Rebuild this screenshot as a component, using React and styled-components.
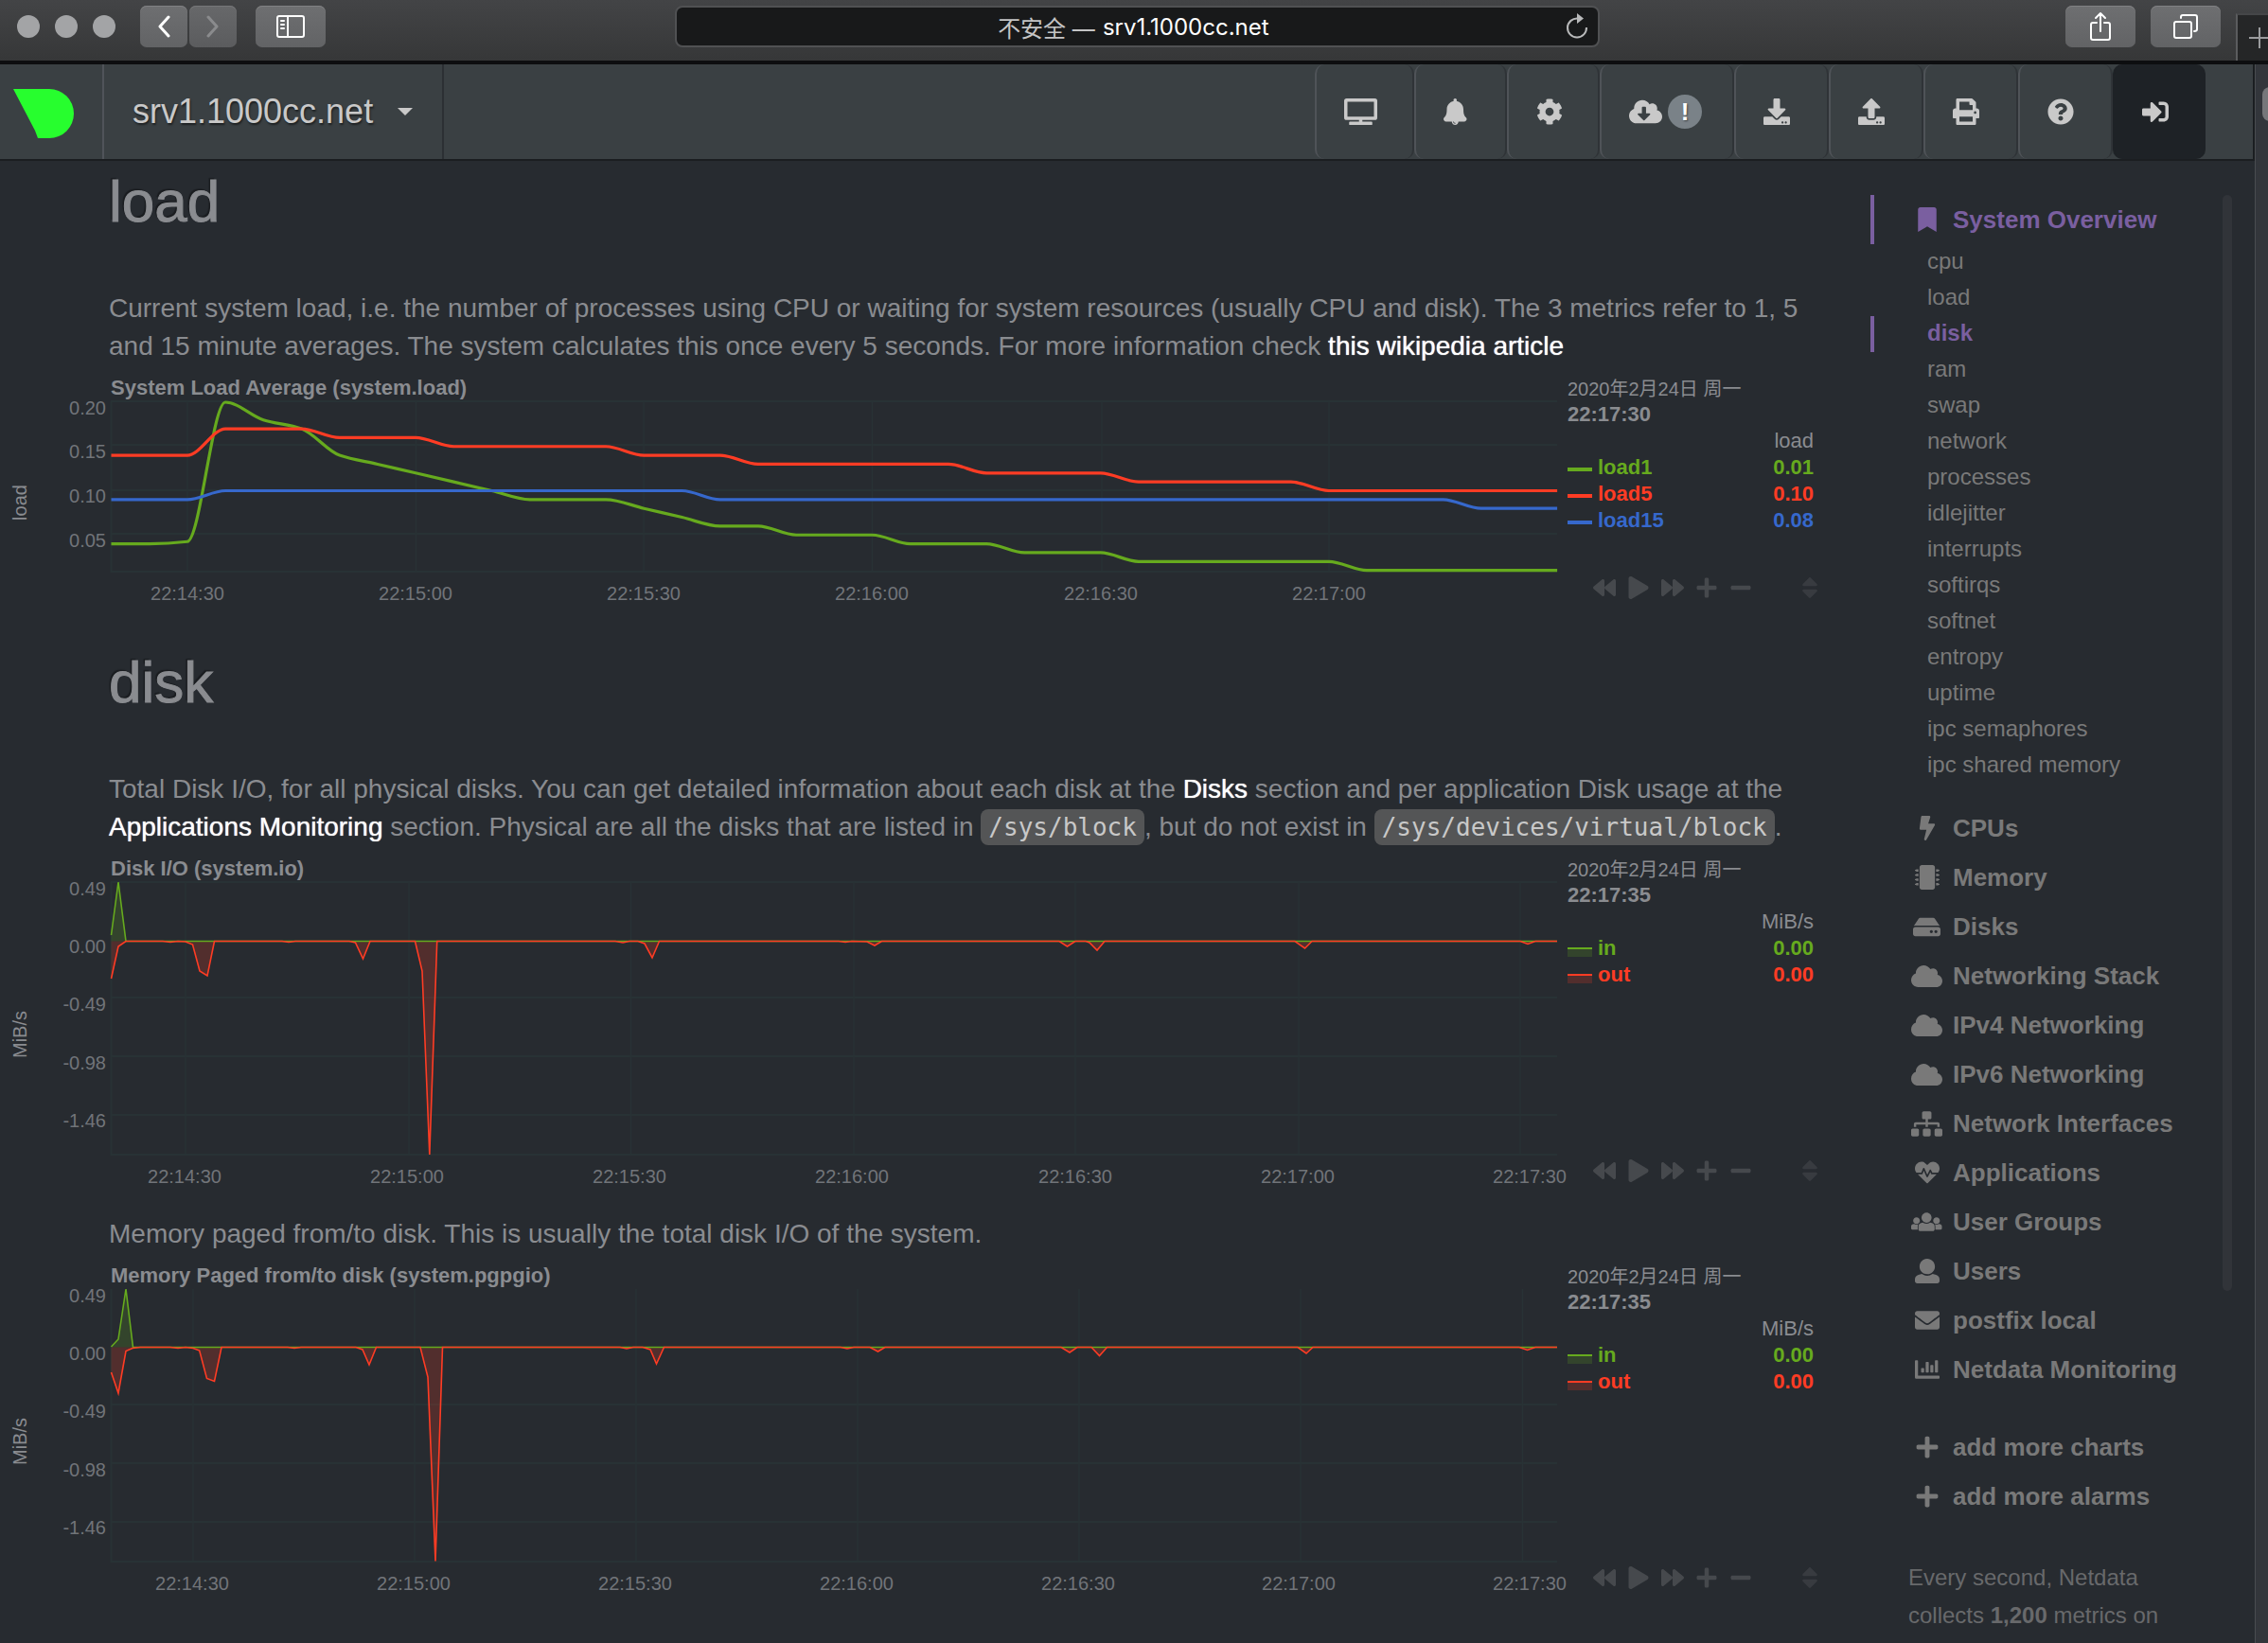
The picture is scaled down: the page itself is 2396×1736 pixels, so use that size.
import React from 'react';
import styled, { createGlobalStyle } from 'styled-components';
import {
  FaTv, FaCog, FaCloudDownloadAlt, FaDownload, FaUpload, FaQuestionCircle, FaSignInAlt,
  FaBookmark, FaBolt, FaMicrochip, FaHdd, FaCloud, FaSitemap, FaHeartbeat, FaEnvelope,
  FaChartBar, FaPlus, FaMinus, FaBackward, FaPlay, FaForward, FaSort,
} from 'react-icons/fa';

const GREEN = '#66aa1e';
const RED = '#ff3c24';
const BLUE = '#3668cc';

const Global = createGlobalStyle`
  * { box-sizing: border-box; }
  html, body { margin: 0; height: 100%; background: #272b30; overflow: hidden; }
  body { font-family: "Liberation Sans", "Noto Sans CJK SC", sans-serif; color: #8a8c90; }
  button { font: inherit; color: inherit; background: none; border: 0; padding: 0; cursor: pointer; }
  a { text-decoration: none; color: inherit; }
  svg { display: block; flex: none; }
`;

/* ---------- browser window ---------- */

const Window = styled.div`
  display: flex;
  flex-direction: column;
  height: 100vh;
  overflow: hidden;
`;

const BrowserBar = styled.div`
  flex: none;
  display: grid;
  grid-template-columns: 713fr 977fr 706fr;
  height: 68px;
  background: linear-gradient(#434446, #363738);
  border-bottom: 4px solid #0d0e10;
`;

const BarSide = styled.div`
  display: flex;
  align-items: flex-start;
  padding-top: 6px;
  padding-left: ${(p) => (p.$end ? 0 : 18)}px;
  justify-content: ${(p) => (p.$end ? 'flex-end' : 'flex-start')};
`;

const Lights = styled.div`
  display: flex;
  gap: 16px;
  height: 44px;
  align-items: center;
  margin-right: 26px;
`;

const Light = styled.span`
  width: 24px;
  height: 24px;
  border-radius: 50%;
  background: #a3a4a6;
`;

const BarButton = styled.button`
  display: flex;
  align-items: center;
  justify-content: center;
  width: ${(p) => p.$w}px;
  height: 44px;
  margin-right: ${(p) => p.$gap}px;
  border-radius: 7px;
  background: linear-gradient(#6e6f71, #626365);
  box-shadow: inset 0 1px #808183;
  color: ${(p) => (p.$dim ? '#98999b' : '#fff')};
  opacity: ${(p) => (p.$dim ? 0.85 : 1)};
`;

const NewTab = styled.button`
  display: flex;
  align-items: center;
  padding-left: 12px;
  width: 34px;
  height: 50px;
  margin-top: 8px;
  border-left: 2px solid #5b5c5e;
  border-top: 2px solid #454648;
  background: #252627;
  color: #9b9c9e;
  overflow: hidden;
`;

const Address = styled.div`
  display: flex;
  align-items: center;
  height: 44px;
  margin-top: 6px;
  padding: 0 10px 0 34px;
  border: 2px solid #505153;
  border-radius: 8px;
  background: #18191a;
  font-family: Inter, "Noto Sans CJK SC", sans-serif;
  font-size: 24px;
  color: #c4c4c5;
`;

const AddressText = styled.label`
  flex: 1;
  display: flex;
  justify-content: center;
  align-items: center;
  gap: 8px;
`;

const AddressInput = styled.input`
  width: 184px;
  padding: 0;
  border: 0;
  background: none;
  color: #fff;
  font: inherit;
`;

/* ---------- page frame ---------- */

const Viewport = styled.div`
  flex: 1;
  min-height: 0;
  display: flex;
`;

const Page = styled.div`
  flex: 1;
  min-width: 0;
  display: flex;
  flex-direction: column;
`;

const Gutter = styled.div`
  flex: none;
  width: 14px;
  padding: 24px 0 0 7px;
  background: #33363b;
  border-left: 1px solid #494c50;
  overflow: hidden;
`;

const Thumb = styled.div`
  width: 16px;
  height: 36px;
  border-radius: 8px;
  background: #76777a;
`;

const Header = styled.header`
  flex: none;
  display: flex;
  height: 102px;
  background: #3a4043;
  border-bottom: 2px solid #1b1e21;
  border-right: 2px solid #1b1e21;
  color: #c9c9c9;
`;

const Brand = styled.a`
  display: flex;
  align-items: center;
  width: 110px;
  padding-left: 14px;
  padding-top: 3px;
  border-right: 2px solid #50545a;
`;

const HostButton = styled.button`
  display: flex;
  align-items: center;
  gap: 26px;
  padding: 0 31px 0 30px;
  border-right: 2px solid #2b2f33;
  font-size: 36px;
  text-shadow: 1px 2px 2px rgba(0, 0, 0, 0.5);
`;

const Tools = styled.nav`
  display: flex;
  margin-left: auto;
  margin-right: 50px;
`;

const Tool = styled.button`
  flex: none;
  display: flex;
  align-items: center;
  gap: 6px;
  width: ${(p) => p.$w}px;
  padding-left: 29px;
  border-left: 2px solid ${(p) => (p.$active ? '#1e2226' : '#4f5358')};
  border-right: 2px solid ${(p) => (p.$active ? '#1e2226' : '#2f3337')};
  border-radius: 10px;
  background: ${(p) => (p.$active ? '#1e2226' : 'transparent')};
`;

const Badge = styled.span`
  width: 36px;
  height: 36px;
  border-radius: 50%;
  background: #7a8288;
  color: #fff;
  font-size: 26px;
  font-weight: bold;
  line-height: 36px;
  text-align: center;
  text-shadow: 1px 1px 2px rgba(0, 0, 0, 0.5);
`;

const Columns = styled.div`
  flex: 1;
  min-height: 0;
  display: flex;
  background: #272b30;
`;

/* ---------- main column ---------- */

const Main = styled.main`
  flex: 1;
  min-width: 0;
  padding-top: 10px;
`;

const Heading = styled.h1`
  margin: 0 0 60px;
  padding-left: 115px;
  font-size: 62px;
  line-height: 66px;
  font-weight: normal;
  -webkit-text-stroke: 1px currentColor;
  text-shadow: -2px -2px 1px rgba(0, 0, 0, 0.35);
`;

const Text = styled.p`
  margin: 0 0 12px;
  padding: 0 44px 0 115px;
  font-size: 28px;
  line-height: 40px;
`;

const TextLink = styled.a`
  color: #fff;
  text-shadow: 0 0 1px #fff;
`;

const Code = styled.code`
  padding: 4px 8px;
  border-radius: 8px;
  background: #545556;
  color: #c8c8c8;
  font-family: "DejaVu Sans Mono", monospace;
  font-size: 26px;
`;

const Figure = styled.section`
  display: flex;
  margin-bottom: ${(p) => p.$after}px;
`;

const Plot = styled.div`
  flex: 1;
  min-width: 0;
  svg { width: 100%; height: auto; overflow: visible; }
  text { font-size: 20px; fill: #717479; }
`;

const PlotTitle = styled.h2`
  margin: 0;
  padding-left: 117px;
  font-size: 22px;
  line-height: 24px;
  font-weight: bold;
`;

const Legend = styled.aside`
  flex: none;
  display: flex;
  flex-direction: column;
  width: 320px;
  font-size: 22px;
  line-height: 28px;
`;

const LegendDate = styled.div`
  font-size: 20px;
  line-height: 26px;
`;

const LegendTime = styled.div`
  font-weight: bold;
`;

const LegendTable = styled.table`
  width: 260px;
  border-collapse: collapse;
  th, td { padding: 0; height: 28px; }
`;

const Unit = styled.th`
  text-align: right;
  font-weight: normal;
`;

const Series = styled.th`
  text-align: left;
  color: ${(p) => p.$color};
`;

const Value = styled.td`
  text-align: right;
  font-weight: bold;
  color: ${(p) => p.$color};
`;

const SeriesName = styled.span`
  display: flex;
  align-items: center;
  gap: 6px;
`;

const Swatch = styled.i`
  width: 26px;
  height: ${(p) => (p.$area ? 10 : 4)}px;
  margin-top: ${(p) => (p.$area ? 8 : 4)}px;
  border-top: ${(p) => (p.$area ? 2 : 4)}px solid ${(p) => p.$color};
  background: ${(p) => p.$color}33;
`;

const Controls = styled.div`
  display: flex;
  align-items: center;
  height: 26px;
  margin: auto 50px 30px 27px;
  color: #46494d;
`;

const Control = styled.button`
  display: flex;
  width: 36px;
`;

const Resize = styled.button`
  display: flex;
  justify-content: flex-end;
  flex: 1;
  color: #383b40;
`;

/* ---------- side menu ---------- */

const Side = styled.aside`
  flex: none;
  display: flex;
  justify-content: space-between;
  width: 406px;
  padding: 36px 24px 0 0;
`;

const Menu = styled.nav`
  width: 340px;
  color: #797979;
`;

const MenuItem = styled.a`
  display: flex;
  align-items: center;
  height: 52px;
  padding-left: 39px;
  border-left: 4px solid ${(p) => (p.$active ? '#7a5fa0' : 'transparent')};
  color: ${(p) => (p.$active ? '#7a5fa0' : 'inherit')};
  font-size: 26px;
  font-weight: bold;
  white-space: nowrap;
`;

const MenuIcon = styled.span`
  display: flex;
  justify-content: center;
  width: 33px;
  margin-right: 11px;
`;

const SubItem = styled.a`
  display: block;
  height: 38px;
  padding-left: 56px;
  border-left: 4px solid ${(p) => (p.$active ? '#7a5fa0' : 'transparent')};
  color: ${(p) => (p.$active ? '#7a5fa0' : 'inherit')};
  font-size: 24px;
  font-weight: ${(p) => (p.$active ? 'bold' : 'normal')};
  line-height: 36px;
`;

const MenuGroup = styled.div`
  margin-bottom: ${(p) => p.$after}px;
`;

const MenuNote = styled.p`
  margin: 0;
  padding-left: 40px;
  font-size: 24px;
  line-height: 40px;
  color: #68696b;
`;

const MenuScroll = styled.div`
  width: 10px;
  height: 1158px;
  border-radius: 5px;
  background: #313439;
`;

/* ---------- drawings ---------- */

const glyph = (w, top, h, d) => ({ size }) => (
  <svg width={(size * w) / 512} height={(size * h) / 512} viewBox={`0 ${top} ${w} ${h}`} fill="currentColor">
    <path d={d} />
  </svg>
);

const BellIcon = glyph(448, 0, 512, 'M433.884 366.059C411.634 343.809 384 316.118 384 208c0-79.394-57.831-145.269-133.663-157.83A31.845 31.845 0 0 0 256 32c0-17.673-14.327-32-32-32s-32 14.327-32 32c0 6.75 2.095 13.008 5.663 18.17C121.831 62.731 64 128.606 64 208c0 108.118-27.643 135.809-49.893 158.059C-16.042 396.208 5.325 448 48.048 448H160c0 35.346 28.654 64 64 64s64-28.654 64-64h111.943c42.638 0 64.151-51.731 33.941-81.941zM224 472a8 8 0 0 1 0 16c-22.056 0-40-17.944-40-40h16c0 13.234 10.766 24 24 24z');
const PrintIcon = glyph(512, 0, 512, 'M464 192h-16V81.941a24 24 0 0 0-7.029-16.97L383.029 7.029A24 24 0 0 0 366.059 0H88C74.745 0 64 10.745 64 24v168H48c-26.51 0-48 21.49-48 48v132c0 6.627 5.373 12 12 12h52v104c0 13.255 10.745 24 24 24h336c13.255 0 24-10.745 24-24V384h52c6.627 0 12-5.373 12-12V240c0-26.51-21.49-48-48-48zm-80 256H128v-96h256v96zM384 224H128V64h192v48c0 8.837 7.163 16 16 16h48v96zm48 72c-13.255 0-24-10.745-24-24s10.745-24 24-24 24 10.745 24 24-10.745 24-24 24z');
const UserIcon = glyph(512, 0, 512, 'M256 0c88.366 0 160 71.634 160 160s-71.634 160-160 160S96 248.366 96 160 167.634 0 256 0zm183.283 333.821l-71.313-17.828c-74.923 53.89-165.738 41.864-223.94 0l-71.313 17.828C29.981 344.505 0 382.903 0 426.955V464c0 26.51 21.49 48 48 48h416c26.51 0 48-21.49 48-48v-37.045c0-44.052-29.981-82.45-72.717-93.134z');
const UsersIcon = glyph(640, 0, 512, 'M320 64c57.99 0 105 47.01 105 105s-47.01 105-105 105-105-47.01-105-105S262.01 64 320 64zm113.463 217.366l-39.982-9.996c-49.168 35.365-108.766 27.473-146.961 0l-39.982 9.996C174.485 289.379 152 318.177 152 351.216V412c0 19.882 16.118 36 36 36h264c19.882 0 36-16.118 36-36v-60.784c0-33.039-22.485-61.837-54.537-69.85zM528 300c38.66 0 70-31.34 70-70s-31.34-70-70-70-70 31.34-70 70 31.34 70 70 70zm-416 0c38.66 0 70-31.34 70-70s-31.34-70-70-70-70 31.34-70 70 31.34 70 70 70zm24 112v-60.784c0-16.551 4.593-32.204 12.703-45.599-29.988 14.72-63.336 8.708-85.69-7.37l-26.655 6.664C14.99 310.252 0 329.452 0 351.477V392c0 13.255 10.745 24 24 24h112.169a52.417 52.417 0 0 1-.169-4zm467.642-107.09l-26.655-6.664c-27.925 20.086-60.89 19.233-85.786 7.218C499.369 318.893 504 334.601 504 351.216V412c0 1.347-.068 2.678-.169 4H616c13.255 0 24-10.745 24-24v-40.523c0-22.025-14.99-41.225-36.358-46.567z');

const Stroke = ({ w, h, d, sw = 2 }) => (
  <svg width={w} height={h} viewBox={`0 0 ${w} ${h}`} fill="none" stroke="currentColor" strokeWidth={sw} strokeLinecap="round" strokeLinejoin="round">
    <path d={d} />
  </svg>
);

/* Cubic segments with flattened tangents at every local extreme. */
function smoothPath(points) {
  const slope = points.slice(1).map((p, i) => (p[1] - points[i][1]) / (p[0] - points[i][0]));
  const tangent = points.map((_, i) => {
    if (i === 0 || i === points.length - 1) return 0;
    const a = slope[i - 1];
    const b = slope[i];
    return a * b <= 0 ? 0 : (2 * a * b) / (a + b);
  });
  return points.slice(1).reduce((path, p, i) => {
    const q = points[i];
    const d = (p[0] - q[0]) / 3;
    return `${path} C${q[0] + d} ${q[1] + tangent[i] * d} ${p[0] - d} ${p[1] - tangent[i + 1] * d} ${p[0]} ${p[1]}`;
  }, `M${points[0][0]} ${points[0][1]}`);
}

const run = (...pairs) => pairs.flatMap(([value, count]) => Array(count).fill(value));
const loadLine = (values) => smoothPath(values.map((v, i) => [117.5 + i * 40.2, 96.5 - (v - 0.1) * 935]));

const load1 = loadLine([
  0.04, 0.04, 0.0425, 0.2, 0.18, 0.17, 0.14, 0.13, 0.12, 0.11, 0.1,
  ...run([0.09, 3], [0.08, 1], [0.07, 1], [0.06, 2], [0.05, 3], [0.04, 3], [0.03, 3], [0.02, 6], [0.01, 6]),
]);
const load5 = loadLine(run([0.14, 3], [0.17, 3], [0.16, 3], [0.15, 5], [0.14, 3], [0.13, 6], [0.12, 4], [0.11, 5], [0.1, 7]));
const load15 = loadLine(run([0.09, 3], [0.1, 13], [0.09, 20], [0.08, 3]));

const Grid = ({ rows, cols, bottom }) => (
  <g stroke="#283235" strokeWidth="2">
    {rows.map((y) => <path key={y} d={`M117 ${y}H1645`} />)}
    {cols.map((x) => <path key={x} d={`M${x} 2V${bottom}`} strokeWidth="1.5" />)}
    <path d={`M117.5 2V${bottom}H1645`} fill="none" />
  </g>
);

const Axes = ({ ys, xs, xY, name, nameY }) => (
  <g>
    {ys.map(([y, t]) => <text key={t} x="112" y={y + 7} textAnchor="end">{t}</text>)}
    {xs.map(([x, t]) => <text key={t} x={x} y={xY + 7} textAnchor="middle">{t}</text>)}
    <text transform={`translate(28 ${nameY}) rotate(-90)`} textAnchor="middle" style={{ fill: '#8a8c90' }}>{name}</text>
  </g>
);

const times = ['22:14:30', '22:15:00', '22:15:30', '22:16:00', '22:16:30', '22:17:00', '22:17:30'];
const label = (xs) => xs.map((x, i) => [x, times[i]]);

const LoadPlot = () => (
  <svg viewBox="0 0 1656 242" role="img" aria-label="System load">
    <Grid rows={[2, 48, 96, 142]} cols={[198, 439.5, 680, 921.5, 1164, 1404]} bottom={182} />
    <g fill="none" strokeWidth="3.2">
      <path d={load1} stroke={GREEN} />
      <path d={load5} stroke={RED} />
      <path d={load15} stroke={BLUE} />
    </g>
    <Axes
      ys={[[9, '0.20'], [55, '0.15'], [102, '0.10'], [149, '0.05']]}
      xs={label([198, 439, 680, 921, 1163, 1404])}
      xY={205}
      name="load"
      nameY={109}
    />
  </svg>
);

const points = (list) => list.map((p) => p.join(' ')).join('L');
const AreaPlot = ({ zero, rows, cols, labelX, ins, outs, name }) => (
  <svg viewBox="0 0 1656 350" role="img" aria-label={name}>
    <Grid rows={rows} cols={cols} bottom={290} />
    <path d={`M117.5 ${zero}L${points(ins)}H117.5`} fill={GREEN} fillOpacity="0.2" />
    <path d={`M117.5 ${zero}L${points(outs)}H117.5`} fill={RED} fillOpacity="0.2" />
    <path d={`M${points(ins)}H1645`} fill="none" stroke={GREEN} strokeWidth="1.6" />
    <path d={`M${points(outs)}H1645`} fill="none" stroke={RED} strokeWidth="1.6" />
    <Axes
      ys={[[9, '0.49'], [70, '0.00'], [131, '-0.49'], [193, '-0.98'], [254, '-1.46']]}
      xs={label(labelX)}
      xY={313}
      name="MiB/s"
      nameY={163}
    />
  </svg>
);

const ioIn = [[117.5, 58], [125, 2], [133, 64.5]];
const ioOut = [
  [117.5, 104], [125, 70], [133, 64.5], [172, 64.5], [180, 65.5], [188, 64.5], [196, 65], [203.5, 68], [211, 96], [219, 101], [226.5, 64.5],
  [298, 64.5], [305, 65.5], [312, 64.5], [369, 64.5], [375.5, 66], [383.5, 83], [391, 64.5], [438.5, 64.5], [446, 96], [453.8, 290], [461.7, 64.5],
  [650, 64.5], [658, 66], [665, 64.5], [674, 64.5], [681, 67], [689, 82], [696.5, 64.5], [886, 64.5], [893, 65.5], [900, 64.5],
  [916, 65], [924, 69], [931.5, 64.5], [1119, 64.5], [1127.5, 70], [1136, 64.5], [1147, 64.5], [1151, 66], [1159, 74], [1167, 64.5],
  [1368, 64.5], [1378.5, 72], [1386, 64.5], [1606, 64.5], [1614, 67.5], [1622, 64.5],
];
const pgIn = [[117.5, 63], [125, 55], [133, 2], [140.5, 63.5]];
const pgOut = [
  [117.5, 90], [125, 112], [133, 67.5], [140, 64.5], [148, 63.5], [180, 63.5], [188, 64.5], [196, 63.5], [204, 64.5], [210.7, 67], [218.5, 96.5], [226.5, 99.5],
  [234, 63.5], [304, 63.5], [311, 64.5], [318, 63.5], [376, 63.5], [383, 66], [390, 82], [397.5, 63.5], [444, 63.5], [452, 95], [460, 289.5], [467.5, 63.5],
  [655, 63.5], [662, 65], [669, 63.5], [679, 63.5], [687, 66], [693.5, 81], [701.5, 63.5], [888, 63.5], [895, 65], [902, 63.5],
  [919, 63.5], [927.5, 68], [935, 63.5], [1121, 63.5], [1130, 69], [1138, 63.5], [1153, 63.5], [1161.5, 72.5], [1169.5, 63.5],
  [1371, 63.5], [1380, 70], [1387, 63.5], [1605, 63.5], [1613.6, 66.5], [1622, 63.5],
];

/* ---------- composed parts ---------- */

function Chart({ title, time, unit, series, area, after = 0, children }) {
  return (
    <Figure $after={after}>
      <Plot>
        <PlotTitle>{title}</PlotTitle>
        {children}
      </Plot>
      <Legend>
        <LegendDate>2020年2月24日 周一</LegendDate>
        <LegendTime>{time}</LegendTime>
        <LegendTable>
          <thead><tr><td /><Unit scope="col">{unit}</Unit></tr></thead>
          <tbody>
            {series.map(([name, value, color]) => (
              <tr key={name}>
                <Series scope="row" $color={color}>
                  <SeriesName><Swatch $area={area} $color={color} />{name}</SeriesName>
                </Series>
                <Value $color={color}>{value}</Value>
              </tr>
            ))}
          </tbody>
        </LegendTable>
        <Controls>
          <Control aria-label="Pan left"><FaBackward size={24} /></Control>
          <Control aria-label="Play"><FaPlay size={24} /></Control>
          <Control aria-label="Pan right"><FaForward size={24} /></Control>
          <Control aria-label="Zoom in"><FaPlus size={24} /></Control>
          <Control aria-label="Zoom out"><FaMinus size={24} /></Control>
          <Resize aria-label="Resize"><FaSort size={28} /></Resize>
        </Controls>
      </Legend>
    </Figure>
  );
}

const tools = [
  ['Nodes', 105, <FaTv size={28} style={{ width: 35 }} />],
  ['Alarms', 98, <BellIcon size={28} />],
  ['Settings', 98, <FaCog size={28} />],
  ['Update', 142, <><FaCloudDownloadAlt size={28} style={{ width: 35 }} /><Badge>!</Badge></>],
  ['Import', 100, <FaDownload size={28} />],
  ['Export', 100, <FaUpload size={28} />],
  ['Print', 100, <PrintIcon size={28} />],
  ['Help', 100, <FaQuestionCircle size={28} />],
  ['Sign in', 98, <FaSignInAlt size={28} />],
];

const subItems = [
  'cpu', 'load', 'disk', 'ram', 'swap', 'network', 'processes', 'idlejitter', 'interrupts',
  'softirqs', 'softnet', 'entropy', 'uptime', 'ipc semaphores', 'ipc shared memory',
];

const sections = [
  ['CPUs', FaBolt], ['Memory', FaMicrochip], ['Disks', FaHdd], ['Networking Stack', FaCloud],
  ['IPv4 Networking', FaCloud], ['IPv6 Networking', FaCloud], ['Network Interfaces', FaSitemap],
  ['Applications', FaHeartbeat], ['User Groups', UsersIcon], ['Users', UserIcon],
  ['postfix local', FaEnvelope], ['Netdata Monitoring', FaChartBar],
];

const wide = new Set([FaCloud, FaSitemap]);

const Entry = ({ icon: Icon, text, active }) => (
  <MenuItem href="#" $active={active}>
    <MenuIcon><Icon size={wide.has(Icon) ? 33 : Icon === FaHdd ? 29 : 26} /></MenuIcon>
    {text}
  </MenuItem>
);

const ioSeries = [['in', '0.00', GREEN], ['out', '0.00', RED]];

export default function App() {
  return (
    <Window>
      <Global />
      <BrowserBar>
        <BarSide>
          <Lights><Light /><Light /><Light /></Lights>
          <BarButton aria-label="Back" $w={50} $gap={2}><Stroke w={14} h={24} sw={3} d="M12 2L3 12L12 22" /></BarButton>
          <BarButton aria-label="Forward" $w={50} $gap={20} $dim><Stroke w={14} h={24} sw={3} d="M2 2L11 12L2 22" /></BarButton>
          <BarButton aria-label="Sidebar" $w={74} $gap={0}>
            <Stroke w={30} h={24} d="M3 1H27Q29 1 29 3V21Q29 23 27 23H3Q1 23 1 21V3Q1 1 3 1ZM12 1V23M5 6H8M5 10H8M5 14H8" />
          </BarButton>
        </BarSide>
        <Address>
          <AddressText>不安全 —<AddressInput aria-label="Address" defaultValue="srv1.1000cc.net" /></AddressText>
          <svg width="24" height="28" viewBox="0 0 24 28" fill="none" stroke="#b9babb" strokeWidth="2">
            <path d="M13 5.500A10 10 0 1 0 22 15" />
            <path d="M12 0L19 5.500L12 11Z" fill="#b9babb" stroke="none" />
          </svg>
        </Address>
        <BarSide $end>
          <BarButton aria-label="Share" $w={74} $gap={16}>
            <Stroke w={24} h={32} d="M8 12H4Q2 12 2 14V28Q2 30 4 30H20Q22 30 22 28V14Q22 12 20 12H16M12 21V2M7 7L12 2L17 7" />
          </BarButton>
          <BarButton aria-label="Tabs" $w={74} $gap={16}>
            <Stroke w={26} h={26} d="M3 8H17Q19 8 19 10V23Q19 25 17 25H3Q1 25 1 23V10Q1 8 3 8ZM8 4V3Q8 1 10 1H23Q25 1 25 3V16Q25 18 22 18" />
          </BarButton>
          <NewTab aria-label="New tab"><Stroke w={22} h={22} d="M0 11H22M11 0V22" /></NewTab>
        </BarSide>
      </BrowserBar>

      <Viewport>
        <Page>
          <Header>
            <Brand href="#" aria-label="netdata">
              <svg width="64" height="52" viewBox="0 0 64 52" fill="#27fe2e"><path d="M0 0H38A26 26 0 0 1 38 52H26L23 44Z" /></svg>
            </Brand>
            <HostButton>
              srv1.1000cc.net
              <svg width="16" height="8" viewBox="0 0 16 8" fill="currentColor"><path d="M0 0H16L8 8Z" /></svg>
            </HostButton>
            <Tools>
              {tools.map(([name, width, icon]) => (
                <Tool key={name} aria-label={name} $w={width} $active={name === 'Sign in'}>{icon}</Tool>
              ))}
            </Tools>
          </Header>

          <Columns>
            <Main>
              <Heading>load</Heading>
              <Text>
                Current system load, i.e. the number of processes using CPU or waiting for system resources (usually CPU and disk).
                The 3 metrics refer to 1, 5 and 15 minute averages. The system calculates this once every 5 seconds. For more
                information check <TextLink href="#">this wikipedia article</TextLink>
              </Text>
              <Chart
                title="System Load Average (system.load)"
                time="22:17:30"
                unit="load"
                after={24}
                series={[['load1', '0.01', GREEN], ['load5', '0.10', RED], ['load15', '0.08', BLUE]]}
              >
                <LoadPlot />
              </Chart>

              <Heading>disk</Heading>
              <Text>
                Total Disk I/O, for all physical disks. You can get detailed information about each disk at
                the <TextLink href="#">Disks</TextLink> section and per application Disk usage at
                the <TextLink href="#">Applications Monitoring</TextLink> section. Physical are all the disks that are listed
                in <Code>/sys/block</Code>, but do not exist in <Code>/sys/devices/virtual/block</Code>.
              </Text>
              <Chart title="Disk I/O (system.io)" time="22:17:35" unit="MiB/s" series={ioSeries} area after={4}>
                <AreaPlot
                  name="Disk I/O"
                  zero={64.5}
                  rows={[2, 124, 186, 248]}
                  cols={[196, 432, 666.5, 902, 1136, 1372, 1606]}
                  labelX={[195, 430, 665, 900, 1136, 1371, 1616]}
                  ins={[...ioIn, [1645, 64.5]]}
                  outs={[...ioOut, [1645, 64.5]]}
                />
              </Chart>
              <Text>Memory paged from/to disk. This is usually the total disk I/O of the system.</Text>
              <Chart title="Memory Paged from/to disk (system.pgpgio)" time="22:17:35" unit="MiB/s" series={ioSeries} area>
                <AreaPlot
                  name="Memory paged"
                  zero={63.5}
                  rows={[124, 186, 248]}
                  cols={[204, 438, 672, 906, 1140, 1374, 1608.5]}
                  labelX={[203, 437, 671, 905, 1139, 1372, 1616]}
                  ins={[...pgIn, [1645, 63.5]]}
                  outs={[...pgOut, [1645, 63.5]]}
                />
              </Chart>
            </Main>

            <Side>
              <Menu>
                <MenuGroup $after={21}>
                  <Entry icon={FaBookmark} text="System Overview" active />
                  {subItems.map((s) => <SubItem key={s} href="#" $active={s === 'disk'}>{s}</SubItem>)}
                </MenuGroup>
                <MenuGroup $after={30}>
                  {sections.map(([text, icon]) => <Entry key={text} icon={icon} text={text} />)}
                </MenuGroup>
                <MenuGroup $after={40}>
                  <Entry icon={FaPlus} text="add more charts" />
                  <Entry icon={FaPlus} text="add more alarms" />
                </MenuGroup>
                <MenuNote>Every second, Netdata collects <b>1,200</b> metrics on</MenuNote>
              </Menu>
              <MenuScroll />
            </Side>
          </Columns>
        </Page>
        <Gutter><Thumb /></Gutter>
      </Viewport>
    </Window>
  );
}
